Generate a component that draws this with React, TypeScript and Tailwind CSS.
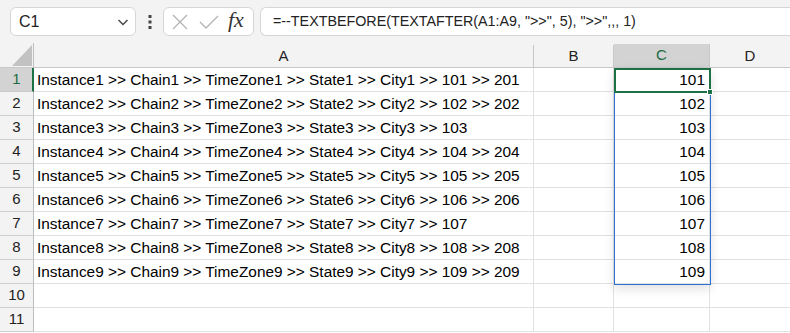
import React from "react";

const rows = [
  "Instance1 >> Chain1 >> TimeZone1 >> State1 >> City1 >> 101 >> 201",
  "Instance2 >> Chain2 >> TimeZone2 >> State2 >> City2 >> 102 >> 202",
  "Instance3 >> Chain3 >> TimeZone3 >> State3 >> City3 >> 103",
  "Instance4 >> Chain4 >> TimeZone4 >> State4 >> City4 >> 104 >> 204",
  "Instance5 >> Chain5 >> TimeZone5 >> State5 >> City5 >> 105 >> 205",
  "Instance6 >> Chain6 >> TimeZone6 >> State6 >> City6 >> 106 >> 206",
  "Instance7 >> Chain7 >> TimeZone7 >> State7 >> City7 >> 107",
  "Instance8 >> Chain8 >> TimeZone8 >> State8 >> City8 >> 108 >> 208",
  "Instance9 >> Chain9 >> TimeZone9 >> State9 >> City9 >> 109 >> 209",
  "",
  "",
];
const vals = ["101", "102", "103", "104", "105", "106", "107", "108", "109", "", ""];

export default function App() {
  return (
    <div
      className="w-[790px] h-[333px] overflow-hidden bg-white text-black"
      style={{ fontFamily: '"Liberation Sans", Arial, sans-serif' }}
    >
      {/* toolbar */}
      <div className="h-[43px] bg-[#f3f3f3] flex items-start pt-[7px] pl-[10px] gap-0">
        <div className="w-[126px] h-[29px] bg-white border border-[#d6d6d6] rounded-[6px] flex items-center justify-between pl-[8px] pr-[5px]">
          <span className="text-[16px] text-[#222]">C1</span>
          <svg width="14" height="14" viewBox="0 0 14 14" className="text-[#444]">
            <path d="M2.5 5 L7 9.5 L11.5 5" fill="none" stroke="currentColor" strokeWidth="1.4" />
          </svg>
        </div>
        <div className="w-[27px] h-[29px] flex items-center justify-center">
          <svg width="4" height="16" viewBox="0 0 4 16">
            <rect x="0.5" y="1" width="3" height="3" fill="#444" />
            <rect x="0.5" y="6.5" width="3" height="3" fill="#444" />
            <rect x="0.5" y="12" width="3" height="3" fill="#444" />
          </svg>
        </div>
        <div className="w-[91px] h-[29px] bg-white border border-[#d6d6d6] rounded-[6px] flex items-center pl-[6px] gap-[8px]">
          <svg width="20" height="20" viewBox="0 0 20 20">
            <path d="M3 3 L17 17 M17 3 L3 17" stroke="#b3b3b3" strokeWidth="1.3" fill="none" />
          </svg>
          <svg width="22" height="20" viewBox="0 0 22 20">
            <path d="M2 10 L8 16 L20 4" stroke="#b3b3b3" strokeWidth="1.3" fill="none" />
          </svg>
          <span
            className="text-[22px] italic text-[#333] leading-none -mt-[3px]"
            style={{ fontFamily: '"Liberation Serif", "Times New Roman", serif' }}
          >
            fx
          </span>
        </div>
        <div className="ml-[6px] flex-1 h-[29px] bg-white border border-[#d6d6d6] border-r-0 rounded-l-[6px] flex items-center pl-[12px]">
          <span className="text-[14.3px] text-[#222] whitespace-pre">
            {'=--TEXTBEFORE(TEXTAFTER(A1:A9, ">>", 5), ">>",,, 1)'}
          </span>
        </div>
      </div>

      {/* column headers */}
      <div className="h-[25px] bg-[#f3f3f3] flex border-b border-[#c8c8c8]">
        <div className="w-[34px] border-r border-[#bdbdbd] flex items-end justify-end pb-[1px] pr-[1px]">
          <svg width="20" height="21" viewBox="0 0 20 21">
            <polygon points="20,0 20,21 0,21" fill="#c2c2c2" />
          </svg>
        </div>
        <div className="w-[500px] mt-[2px] border-r border-[#c8c8c8] flex items-center justify-center text-[15px] text-[#222]">
          A
        </div>
        <div className="w-[80px] mt-[2px] border-r border-[#c8c8c8] flex items-center justify-center text-[15px] text-[#222]">
          B
        </div>
        <div className="w-[96px] mt-[1px] bg-[#d3d3d3] border-r border-[#c8c8c8] flex items-center justify-center text-[15px] text-[#1e6b41]">
          C
        </div>
        <div className="flex-1 mt-[2px] flex items-center justify-center text-[15px] text-[#222]">
          D
        </div>
      </div>

      {/* grid */}
      <div className="relative">
        {rows.map((t, i) => (
          <div key={i} className="h-[24px] flex">
            <div
              className={
                i === 0
                  ? "w-[34px] bg-[#d3d3d3] border-r-2 border-r-[#1e7145] border-b border-b-[#c8c8c8] flex items-center justify-center text-[15px] text-[#1e6b41] pl-[1px]"
                  : "w-[34px] bg-[#f3f3f3] border-r border-r-[#bdbdbd] border-b border-b-[#d0d0d0] flex items-center justify-center text-[15px] text-[#222]"
              }
            >
              {i + 1}
            </div>
            <div className="w-[500px] border-r border-b border-[#e1e1e1] flex items-center pl-[3px] text-[15.4px] whitespace-pre overflow-hidden">
              {t}
            </div>
            <div className="w-[80px] border-r border-b border-[#e1e1e1]" />
            <div className="w-[96px] border-r border-b border-[#e1e1e1] flex items-center justify-end pr-[4px] text-[15.4px]">
              {vals[i]}
            </div>
            <div className="flex-1 border-b border-[#e1e1e1]" />
          </div>
        ))}

        {/* spill range border */}
        <div className="absolute left-[614px] top-0 w-[97px] h-[217px] border border-[#2f6fd1] shadow-[0_4px_10px_rgba(0,0,0,0.12)] pointer-events-none" />
        {/* active cell */}
        <div className="absolute left-[614px] top-0 w-[97px] h-[25px] border-2 border-[#1e7145] pointer-events-none" />
        <div className="absolute left-[707px] top-[21px] w-[6px] h-[6px] bg-[#1e7145] border border-white pointer-events-none" />
      </div>
    </div>
  );
}
